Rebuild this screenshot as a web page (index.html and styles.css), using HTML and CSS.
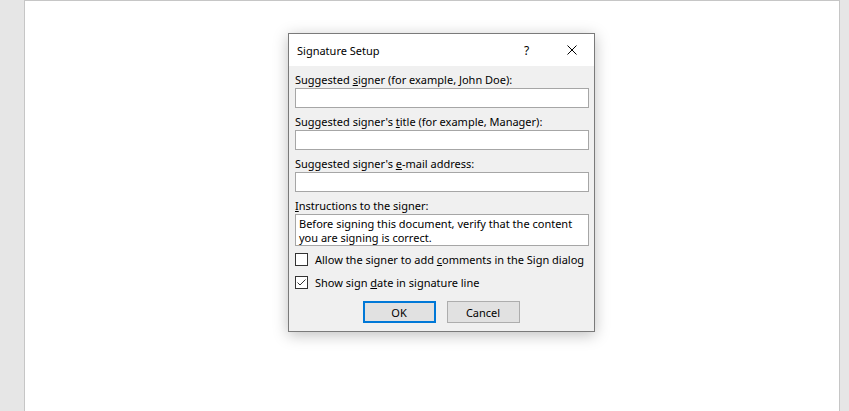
FILE: index.html
```html
<!DOCTYPE html>
<html lang="en">
<head>
  <meta charset="UTF-8">
  <meta name="viewport" content="width=device-width, initial-scale=1.0">
  <title>Signature Setup</title>
  <link rel="stylesheet" href="styles.css">
</head>

<body>
  <div class="doc"></div>

  <div class="dialog">
    <div class="titlebar">
      <span class="title">Signature Setup</span>
      <span class="tbtn help">?</span>
      <span class="tbtn close">
        <svg width="10" height="10" viewBox="0 0 10 10">
          <path d="M0.5 0.5 L9.5 9.5 M9.5 0.5 L0.5 9.5" stroke="#000" stroke-width="1" fill="none"/>
        </svg>
      </span>
    </div>

    <div class="body">
      <label class="lbl">Suggested <u>s</u>igner (for example, John Doe):</label>
      <div class="field"></div>

      <label class="lbl">Suggested signer's <u>t</u>itle (for example, Manager):</label>
      <div class="field"></div>

      <label class="lbl">Suggested signer's <u>e</u>-mail address:</label>
      <div class="field"></div>

      <label class="lbl"><u>I</u>nstructions to the signer:</label>
      <div class="field area">Before signing this document, verify that the content you are signing is correct.</div>

      <div class="check first">
        <span class="box"></span>
        <span>Allow the signer to add <u>c</u>omments in the Sign dialog</span>
      </div>
      <div class="check">
        <span class="box">
          <svg width="11" height="11" viewBox="0 0 11 11">
            <path d="M1.5 5.5 L4 8 L9.5 2.5" stroke="#333" stroke-width="1" fill="none"/>
          </svg>
        </span>
        <span>Show sign <u>d</u>ate in signature line</span>
      </div>

      <div class="buttons">
        <button class="btn default">OK</button>
        <button class="btn">Cancel</button>
      </div>
    </div>
  </div>
</body>
</html>
```

FILE: styles.css
```css
body {
  margin: 0;
  height: 411px;
  overflow: hidden;
  background-color: #e6e6e6;
  font-family: "Noto Sans", sans-serif;
  font-size: 11px;
  color: #000;
}

/* the document page behind the dialog */
.doc {
  margin-left: 24px;
  width: 816px;
  height: 411px;
  box-sizing: border-box;
  background-color: #fff;
  border: 1px solid #c6c6c6;
  border-bottom: none;
}

.dialog {
  position: absolute;
  left: 288px;
  top: 33px;
  width: 307px;
  height: 299px;
  box-sizing: border-box;
  border: 1px solid #7a7a7a;
  background-color: #f0f0f0;
  box-shadow: 0 3px 14px rgba(0,0,0,0.25);
}

.titlebar {
  display: flex;
  align-items: center;
  height: 32px;
  background-color: #fff;
}

.title {
  flex: 1;
  padding-left: 8px;
}

.tbtn {
  width: 45px;
  height: 32px;
  display: flex;
  align-items: center;
  justify-content: center;
}

.help {
  font-size: 12px;
}

.body {
  padding: 6px 5px 7px 6px;
}

.lbl {
  display: block;
  height: 16px;
  line-height: 16px;
}

.field {
  height: 20px;
  box-sizing: border-box;
  margin-bottom: 6px;
  background-color: #fff;
  border: 1px solid #a6a6a6;
}

.area {
  height: 32px;
  margin-bottom: 0;
  padding: 2px 3px;
  line-height: 14px;
}

.check {
  display: flex;
  align-items: center;
  height: 13px;
  line-height: 13px;
  margin-top: 10px;
}

.check.first {
  margin-top: 7px;
}

.box {
  width: 13px;
  height: 13px;
  box-sizing: border-box;
  margin-right: 7px;
  border: 1px solid #333;
  background-color: #fff;
  display: flex;
  align-items: center;
  justify-content: center;
}

.buttons {
  display: flex;
  justify-content: center;
  gap: 11px;
  margin-top: 12px;
  padding-right: 2px;
}

.btn {
  width: 73px;
  height: 22px;
  box-sizing: border-box;
  padding: 0;
  font-family: inherit;
  font-size: 11px;
  color: #000;
  background-color: #e1e1e1;
  border: 1px solid #adadad;
}

.btn.default {
  border: 2px solid #0078d7;
}
```
